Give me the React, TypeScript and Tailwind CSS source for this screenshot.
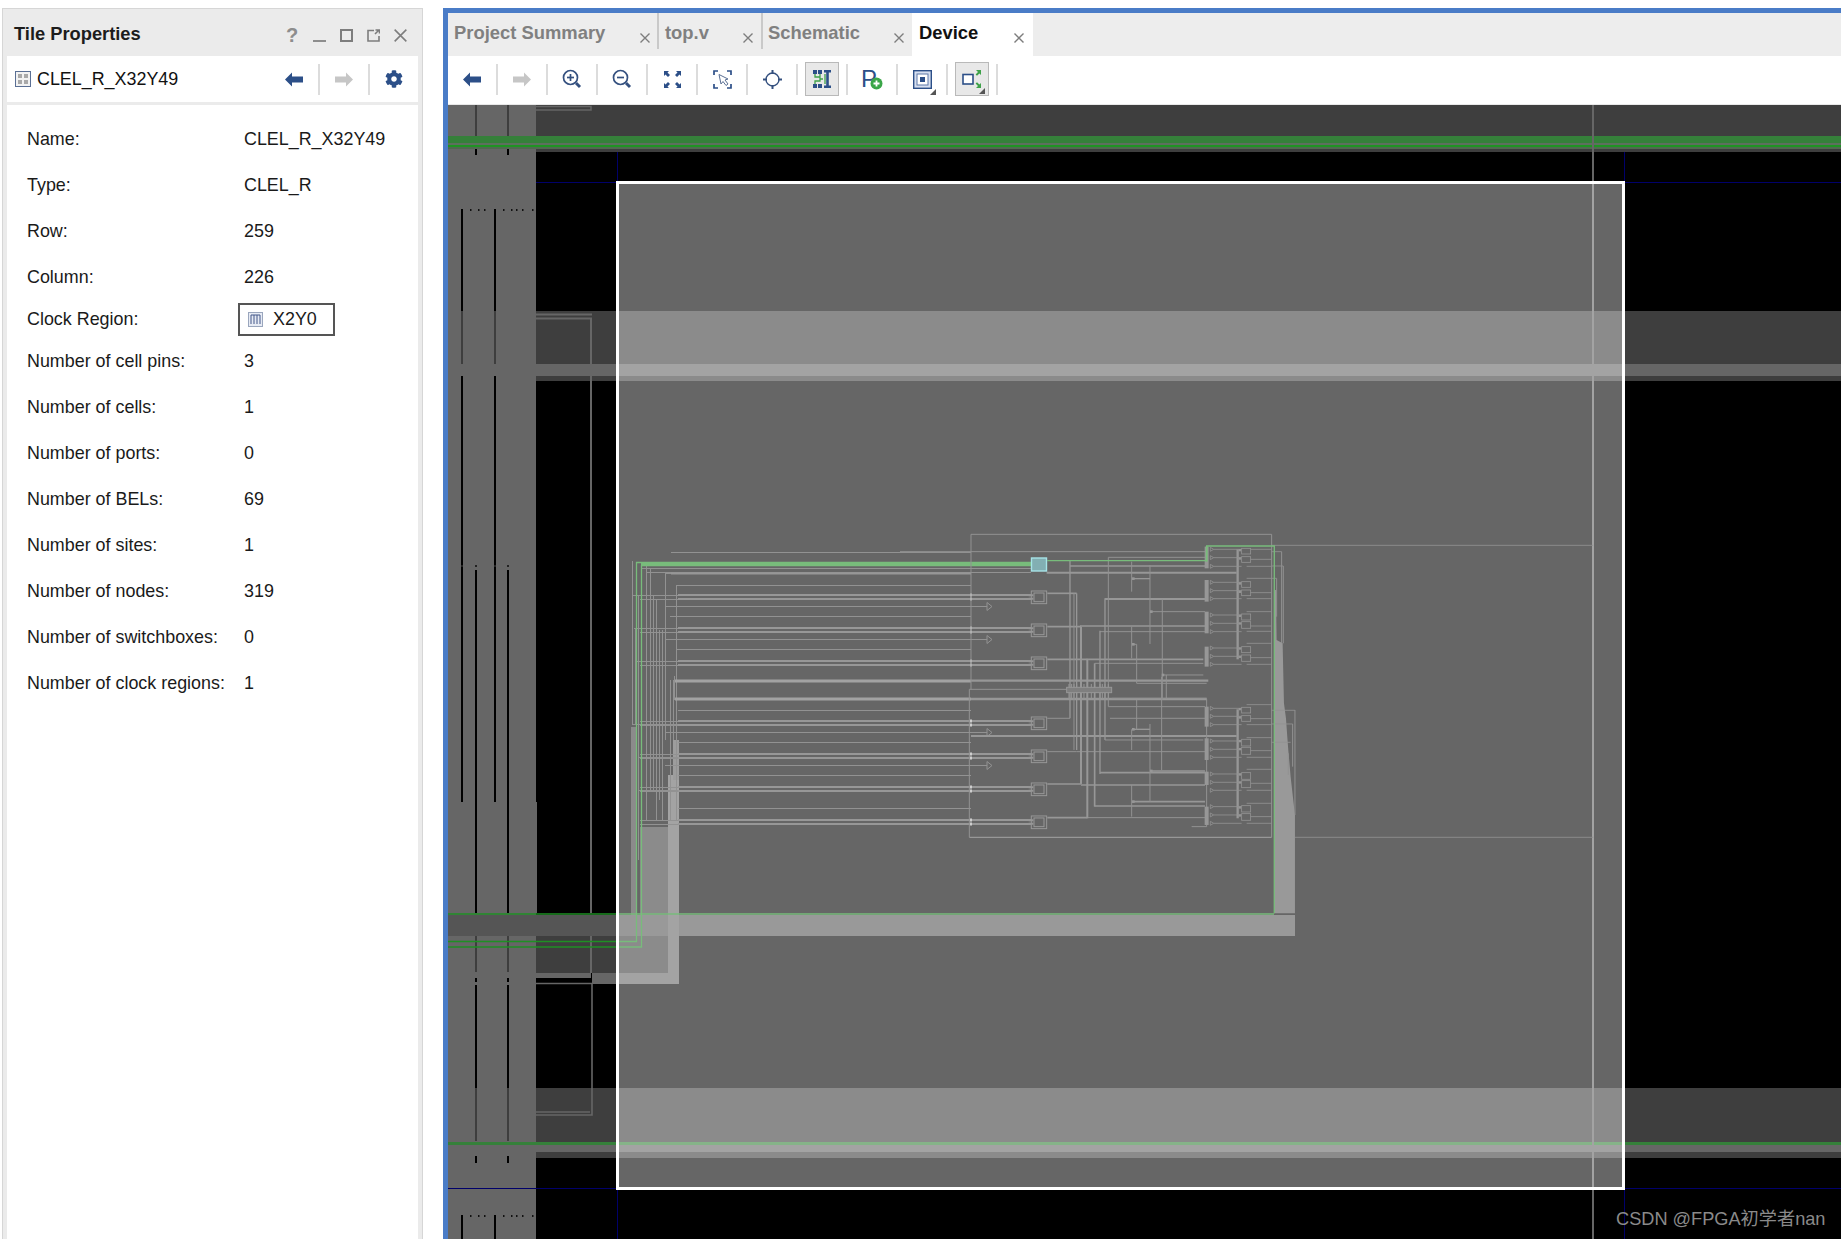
import { FaCog } from 'react-icons/fa';

const sans = "font-['Liberation_Sans',Arial,sans-serif]";

const rows: [string, string][] = [
  ['Name:', 'CLEL_R_X32Y49'],
  ['Type:', 'CLEL_R'],
  ['Row:', '259'],
  ['Column:', '226'],
  ['Clock Region:', 'X2Y0'],
  ['Number of cell pins:', '3'],
  ['Number of cells:', '1'],
  ['Number of ports:', '0'],
  ['Number of BELs:', '69'],
  ['Number of sites:', '1'],
  ['Number of nodes:', '319'],
  ['Number of switchboxes:', '0'],
  ['Number of clock regions:', '1'],
];

const BLUE = '#2c4f88';

const BackArrow = () => (
  <svg width="18" height="15" viewBox="0 0 18 15"><path d="M0 7.5 7 .5v4h11v6H7v4z" fill={BLUE} /></svg>
);
const ForwardArrow = () => (
  <svg width="18" height="15" viewBox="0 0 18 15"><path d="M18 7.5 11 .5v4H0v6h11v4z" fill="#c6c6c6" /></svg>
);
const ZoomIcon = ({ plus }: { plus?: boolean }) => (
  <svg width="20" height="20" viewBox="0 0 20 20" fill="none" stroke="#34507f" strokeWidth="1.7">
    <circle cx="8.5" cy="8.5" r="7" />
    <path d="M5 8.5h7" />
    {plus && <path d="M8.5 5v7" />}
    <path d="m14 14 4 4" strokeWidth="3" />
  </svg>
);
const FitIcon = () => (
  <svg width="19" height="19" viewBox="0 0 19 19" fill={BLUE}>
    <path d="M1 1h5L4.500 2.500 7 5 5 7 2.500 4.500 1 6zM18 1h-5l1.500 1.500L12 5l2 2 2.500-2.500L18 6zM1 18h5l-1.500-1.500L7 14l-2-2-2.500 2.500L1 13zM18 18h-5l1.500-1.500L12 14l2-2 2.500 2.500L18 13z" />
  </svg>
);
const SelectIcon = () => (
  <svg width="19" height="19" viewBox="0 0 19 19" fill="none">
    <path d="M1 5V1h4M14 1h4v4M1 14v4h4M18 14v4h-4" stroke={BLUE} strokeWidth="1.7" />
    <path d="m6 4.500 2 9.500 2-2.500 3 4 2-1.500-3-4 3-1z" stroke="#5a6f94" fill="#fff" strokeWidth="1" />
  </svg>
);
const CrosshairIcon = () => (
  <svg width="19" height="19" viewBox="0 0 19 19" fill="none" stroke="#34507f" strokeWidth="1.4">
    <circle cx="9.500" cy="9.500" r="6.500" />
    <path d="M9.500 0v4M9.500 15v4M0 9.500h4M15 9.500h4" strokeWidth="2" />
  </svg>
);
const RouteIcon = () => (
  <svg width="18" height="18" viewBox="0 0 18 18">
    <path d="M2 4v3h5V4M7 7v4H2v3M10 9H7M12 4v10" fill="none" stroke="#3fa24a" strokeWidth="1.300" />
    <path d="M0 0h4v4H0zM5 0h4v4H5zM0 14h4v4H0zM5 14h4v4H5zM11 0h7v2.500h-2.200v13H18V18h-7v-2.500h2.200v-13H11z" fill={BLUE} />
  </svg>
);
const PinIcon = () => (
  <svg width="22" height="24" viewBox="0 0 22 24" className="overflow-visible">
    <text x="0" y="20" fontSize="24" fontFamily="Liberation Sans" fill={BLUE}>P</text>
    <circle cx="15.500" cy="16.500" r="6" fill="#3aa648" />
    <path d="M12.500 16.500h6M15.500 13.500v6" stroke="#fff" strokeWidth="1.800" />
  </svg>
);
const Corner = () => <div className="absolute right-[3px] bottom-[1px] w-0 h-0 border-l-[6px] border-l-transparent border-b-[6px] border-b-[#555]" />;
const FrameIcon = () => (
  <svg width="19" height="19" viewBox="0 0 19 19">
    <rect x=".7" y=".7" width="17.600" height="17.600" fill="#d6dff0" stroke={BLUE} strokeWidth="1.400" />
    <rect x="4" y="4" width="11" height="11" fill="#fff" stroke="#5c78a8" />
    <rect x="7" y="7" width="5" height="5" fill={BLUE} />
  </svg>
);
const ExpandIcon = () => (
  <svg width="20" height="20" viewBox="0 0 20 20">
    <rect x="1" y="5.500" width="10" height="9.500" fill="#fff" stroke={BLUE} strokeWidth="1.600" />
    <path d="M14 1h5v5l-1.600-1.600-2.400 2.400-1.400-1.400 2.400-2.400zM14 19h5v-5l-1.600 1.600-2.400-2.400-1.400 1.400 2.400 2.400z" fill="#3fa24a" />
  </svg>
);
const TileIcon = () => (
  <svg width="16" height="16" viewBox="0 0 16 16">
    <rect x=".5" y=".5" width="15" height="15" fill="#f2f2f2" stroke="#5a6f94" />
    <path d="M3 3h4v4H3zM9 3h4v4H9zM3 9h4v4H3zM9 9h4v4H9z" fill="#a9a9a9" />
  </svg>
);
const ClockIcon = () => (
  <svg width="15" height="15" viewBox="0 0 15 15" fill="none">
    <rect x=".5" y=".5" width="14" height="14" fill="#e7ebf4" stroke="#9aa6bd" />
    <path d="M3 12V3h3v9M6 3h3v9M9 3h3v9" stroke="#44598a" strokeWidth="1" />
  </svg>
);

const CloseX = ({ size = 10, color = '#7d7d7d', width = 1.4 }: { size?: number; color?: string; width?: number }) => (
  <svg width={size} height={size} viewBox="0 0 10 10" className="shrink-0"><path d="m.5.500 9 9M9.500.500l-9 9" stroke={color} strokeWidth={width} fill="none" /></svg>
);

const Sep = () => <div className="w-[2px] h-[31px] bg-[#dcdcdc] shrink-0" />;
const Btn = ({ children, active, corner }: { children: React.ReactNode; active?: boolean; corner?: boolean }) => (
  <div className="w-[48px] h-[34px] flex items-center justify-center shrink-0">
    <div className={active ? 'relative w-[34px] h-[34px] flex items-center justify-center bg-[#e8e8e8] border border-[#b9b9b9]' : 'relative w-[34px] h-[34px] flex items-center justify-center'}>
      {children}
      {corner && <Corner />}
    </div>
  </div>
);

const cells = [564, 597, 630, 663, 723, 756, 789, 822];
const topThin: [number, number][] = [[552, 671], [585, 677], [616, 670], [649, 677], [710, 678], [742, 678], [775, 678], [808, 678]];
const lowThin = [606, 639, 732, 765];
const stackV: [number, number, number][] = [
  [632, 561, 724], [635, 628, 724], [638, 595, 860], [646, 565, 820], [650, 568, 790], [653, 595, 790],
  [656, 600, 820], [659, 630, 800], [662, 630, 820], [665, 573, 740], [670, 680, 820], [673, 680, 740], [676, 585, 820],
];
const stackH: [number, number, number][] = [
  [632, 595, 678], [634, 628, 678], [635, 661, 678], [632, 724, 678], [638, 757, 678], [638, 790, 678],
  [642, 568, 1031], [646, 572, 1031], [665, 573, 971],
];

// right half of the schematic, in zoom units (1/3 px)
const hLines: [number, number, number, number][] = [
  [213, 103, 1115, 3], [0, 155, 920, 3], [442, 280, 530, 5], [442, 380, 543, 5], [442, 478, 562, 5], [442, 655, 510, 3],
  [442, 755, 530, 3], [442, 852, 543, 5], [442, 953, 562, 5], [625, 172, 920, 3], [510, 198, 920, 5], [440, 218, 1010, 6],
  [615, 297, 915, 6], [600, 395, 915, 3], [540, 378, 915, 5], [584, 490, 910, 3], [560, 478, 910, 5], [213, 542, 925, 7],
  [213, 597, 920, 7], [625, 620, 915, 3], [630, 655, 920, 3], [213, 708, 1010, 6], [615, 720, 910, 3], [530, 755, 915, 3],
  [600, 818, 915, 5], [543, 855, 915, 5], [584, 918, 915, 4], [562, 953, 915, 3], [700, 236, 750, 4], [755, 335, 915, 3],
  [700, 433, 710, 3], [790, 525, 910, 3], [700, 688, 750, 4], [755, 813, 915, 5], [700, 905, 915, 5], [208, 1012, 1115, 4],
  [208, 568, 500, 3], [875, 980, 920, 3], [710, 550, 920, 3], [635, 595, 920, 3],
];
const vLines: [number, number, number, number][] = [
  [213, 103, 568, 3], [208, 568, 1012, 3], [1115, 103, 1012, 3], [510, 182, 655, 4], [522, 280, 750, 3], [530, 280, 750, 4],
  [543, 380, 852, 6], [562, 478, 955, 6], [584, 490, 920, 5], [600, 392, 822, 4], [615, 295, 720, 4], [625, 172, 620, 3],
  [695, 185, 275, 3], [750, 195, 432, 3], [787, 297, 600, 3], [799, 525, 597, 3], [695, 380, 475, 3], [710, 433, 550, 3],
  [710, 600, 690, 3], [750, 672, 905, 3], [695, 688, 750, 3], [785, 530, 810, 3], [695, 855, 950, 3], [920, 597, 980, 3],
  [1013, 148, 478, 7], [1013, 628, 955, 7], [1130, 235, 350, 3], [1145, 155, 430, 3], [1150, 198, 430, 3], [1185, 630, 945, 3], [1178, 672, 800, 3], [1165, 760, 825, 3],
];
const pinGroups: [number, number][] = [[140, 205], [240, 305], [335, 400], [440, 500], [620, 680], [715, 780], [815, 855], [920, 975]];
const tris = [148, 173, 199, 247, 272, 296, 345, 370, 395, 444, 469, 493, 625, 649, 674, 723, 748, 772, 822, 847, 871, 920, 945, 970];
const boxes: [number, number][] = [[145, 17], [170, 17], [245, 17], [270, 17], [342, 18], [365, 20], [440, 18], [465, 19], [622, 17], [647, 17], [718, 20], [742, 21], [818, 20], [842, 21], [917, 19], [941, 20]];
const toEdge = [148, 178, 199, 235, 278, 296, 335, 378, 394, 430, 473, 493, 614, 656, 674, 713, 752, 772, 808, 850, 871, 910, 950, 970];
const busV = [507, 515, 522, 530, 543, 552, 562, 574, 584, 600, 607, 615, 625];

const LINE = '#4a4a4a';
const THICK = '#525252';
const GREEN = '#1f8f24';

function DeviceView() {
  return (
    <svg viewBox="448 105 1393 1134" width="1393" height="1134" className="block">
      <rect x="448" y="105" width="1393" height="1134" fill="#000" />

      {/* clock region bands */}
      <rect x="536" y="105" width="1305" height="31" fill="#3e3e3e" />
      <rect x="536" y="311" width="1305" height="53" fill="#3e3e3e" />
      <rect x="536" y="364" width="1305" height="12" fill="#666" />
      <rect x="536" y="376" width="1305" height="5" fill="#3e3e3e" />
      <rect x="536" y="1088" width="1305" height="54" fill="#3e3e3e" />
      <rect x="536" y="1145" width="1305" height="7" fill="#666" />
      <rect x="536" y="1152" width="1305" height="6" fill="#3e3e3e" />
      <rect x="536" y="936" width="132" height="37" fill="#3e3e3e" />

      {/* left column */}
      <rect x="448" y="105" width="88" height="1134" fill="#666" />

      {/* green bands */}
      <rect x="448" y="136" width="1393" height="7" fill="#35803a" />
      <rect x="448" y="143" width="1393" height="2" fill="#5e6f5e" />
      <rect x="448" y="145" width="1393" height="2" fill="#1f9423" />
      <rect x="448" y="147" width="1393" height="2" fill="#4f6a4f" />
      <rect x="536" y="149" width="1305" height="3" fill="#3e3e3e" />
      <rect x="448" y="1142" width="1393" height="3" fill="#35803a" />

      {/* column wires */}
      {[462, 495].map((x) => (
        <g key={x}>
          <rect x={x - 1} y="209" width="2" height="102" fill="#000" />
          <rect x={x - 1} y="311" width="2" height="53" fill="#3e3e3e" />
          <rect x={x - 1} y="376" width="2" height="426" fill="#000" />
          <rect x={x - 1} y="1215" width="2" height="24" fill="#000" />
        </g>
      ))}
      {[476, 508].map((x) => (
        <g key={x}>
          <rect x={x - 1} y="105" width="2" height="31" fill="#3e3e3e" />
          <rect x={x - 1} y="149" width="2" height="6" fill="#000" />
          <rect x={x - 1} y="570" width="2" height="343" fill="#000" />
          <rect x={x - 1} y="936" width="2" height="36" fill="#3e3e3e" />
          <rect x={x - 1} y="978" width="2" height="4" fill="#000" />
          <rect x={x - 1} y="985" width="2" height="103" fill="#000" />
          <rect x={x - 1} y="1088" width="2" height="53" fill="#3e3e3e" />
          <rect x={x - 1} y="1156" width="2" height="7" fill="#000" />
        </g>
      ))}
      {[209, 1215].map((y) =>
        [470, 478, 484, 503, 511, 516, 522, 532].map((x) => <rect key={`${x}-${y}`} x={x} y={y} width="1.500" height="2" fill="#111" />),
      )}
      {[462, 476, 495, 508].map((x) => <rect key={x} x={x - 1} y="565" width="2" height="2" fill="#222" />)}
      <rect x="535" y="802" width="2" height="111" fill="#666" />

      {/* tile outlines */}
      <path d="M536 106.500H591V110H536" fill="none" stroke="#666" strokeWidth="1.500" />
      <path d="M536 314.500H592M536 318.500H591V364M591 376V913M591 936V973" fill="none" stroke="#666" strokeWidth="2" />
      <rect x="536" y="973" width="55" height="5" fill="#666" />
      <path d="M536 983.500H592V1115H536M536 1112H590" fill="none" stroke="#666" strokeWidth="1.600" />
      <path d="M1593 105V1239" stroke="#666" strokeWidth="2" />

      {/* navy nets */}
      <path d="M536 182.500H617M617.500 152V182M1625 182.500H1841M1624.500 152V182M448 1188.500H617M1625 1188.500H1841M617.500 1189V1239M1624.500 1189V1239" fill="none" stroke="#00006a" strokeWidth="1" />

      {/* thick route */}
      <rect x="448" y="915" width="847" height="21" fill="#555" />
      <rect x="592" y="973" width="87" height="11" fill="#666" />
      <rect x="668" y="775" width="11" height="198" fill="#666" />
      <rect x="673" y="740" width="6" height="40" fill="#5c5c5c" />
      <rect x="631" y="727" width="6" height="188" fill="#3e3e3e" />
      <rect x="640" y="827" width="28" height="88" fill="#3e3e3e" />
      <rect x="631" y="936" width="37" height="37" fill="#3e3e3e" />

      {/* left bundle */}
      {stackV.map(([x, a, b]) => <path key={`${x}-${a}`} d={`M${x + 0.5} ${a}V${b}`} stroke={LINE} strokeWidth="1" />)}
      {stackH.map(([x, y, x2]) => <path key={`${x}-${y}`} d={`M${x} ${y + 0.5}H${x2}`} stroke={LINE} strokeWidth="1" />)}
      {topThin.map(([y, x]) => <path key={y} d={`M${x} ${y + 0.5}H971`} stroke={LINE} strokeWidth="1" />)}
      {lowThin.map((y) => <path key={y} d={`M665 ${y + 0.5}H990`} stroke={LINE} strokeWidth="1" />)}
      <path d="M671 573.500H971" stroke={THICK} strokeWidth="2" />
      <path d="M674 681H971M675 699H971" stroke="#646464" strokeWidth="3" />
      <path d="M674.500 676V700" stroke={LINE} strokeWidth="1" fill="none" />
      {cells.slice(1).map((c) => (
        <g key={c}>
          <path d={`M640 ${c - 1.5}H678M640 ${c + 2.5}H678`} stroke={LINE} strokeWidth="1" />
          <path d={`M678 ${c - 2}H1031M678 ${c + 2}H1031`} stroke={THICK} strokeWidth="2" />
          <rect x="970" y={c - 3.5} width="2" height="3" fill="#adadad" />
          <rect x="970" y={c + 0.5} width="2" height="3" fill="#adadad" />
        </g>
      ))}
      {lowThin.map((y) => <path key={y} d={`M987 ${y - 3.5}l5 4-5 4z`} fill="#000" stroke={LINE} strokeWidth="1" />)}

      {/* green nets */}
      <path d="M448 914H1274M448 941.500H636.500V562.500H1031M448 947H641.500V565.500H1031" fill="none" stroke={GREEN} strokeWidth="1.300" />
      <path d="M641 564H1031" stroke={GREEN} strokeWidth="1.800" />

      {/* schematic, right side */}
      <g transform="translate(900 500) scale(0.3333)">
        <path d="M1122 270H1128L1130 420 1148 430 1152 610 1158 655 1162 710 1165 750 1172 830 1185 945V1240H1122Z" fill="#555" />
        <path d="M1115 136H2080M1185 1012H2080" fill="none" stroke={LINE} strokeWidth="2.500" />
        <path d="M1115 155H1145M1115 198H1150M1115 235H1130M1115 631H1185M1115 672H1178M1115 727H1172" fill="none" stroke={LINE} strokeWidth="2.500" />
        {hLines.map(([x, y, x2, w]) => <path key={`${x}-${y}`} d={`M${x} ${y}H${x2}`} stroke={w > 3 ? THICK : LINE} strokeWidth={w} />)}
        {vLines.map(([x, a, b, w]) => <path key={`${x}-${a}`} d={`M${x} ${a}V${b}`} stroke={w > 3 ? THICK : LINE} strokeWidth={w} />)}
        {toEdge.map((y) => <path key={y} d={`M1040 ${y}H1115`} stroke={LINE} strokeWidth="2.500" />)}
        {tris.map((y) => <path key={y} d={`M941 ${y}H1025`} stroke={LINE} strokeWidth="2.500" />)}
        {pinGroups.map(([a, b]) => <path key={a} d={`M920 ${a}V${b}`} stroke={THICK} strokeWidth="12" />)}
        {tris.map((y) => <path key={y} d={`M931 ${y - 6}l10 6-10 6z`} fill="#000" stroke={LINE} strokeWidth="2.500" />)}
        {boxes.map(([y, h]) => <rect key={y} x="1025" y={y} width="27" height={h} fill="#000" stroke={LINE} strokeWidth="2.500" />)}
        {boxes.map(([y]) => <rect key={y} x="1016" y={y + 2} width="7" height="7" fill={THICK} />)}
        <rect x="500" y="562" width="135" height="16" fill="#2a2a2a" stroke={THICK} strokeWidth="3" />
        {busV.map((x) => <path key={x} d={`M${x} 552V562M${x} 578V596`} stroke={THICK} strokeWidth="3" />)}
        <rect x="696" y="232" width="8" height="8" fill={THICK} />
        <rect x="750" y="331" width="8" height="8" fill={THICK} />
        <rect x="696" y="429" width="8" height="8" fill={THICK} />
        <rect x="785" y="521" width="8" height="8" fill={THICK} />
        <rect x="696" y="684" width="8" height="8" fill={THICK} />
        <rect x="750" y="809" width="8" height="8" fill={THICK} />
        <rect x="696" y="901" width="8" height="8" fill={THICK} />
        {/* cells */}
        {[292, 391, 490, 670, 769, 868, 967].map((c) => (
          <g key={c}>
            <rect x="394" y={c - 19} width="46" height="38" fill="none" stroke={THICK} strokeWidth="3" />
            <rect x="402" y={c - 13} width="30" height="26" fill="#000" stroke={THICK} strokeWidth="3" />
            <path d={`M386 ${c - 6}h14M386 ${c + 4}h14`} stroke={THICK} strokeWidth="6" />
          </g>
        ))}
        <path d="M442 182H510M510 182H920V138H1123V1240" fill="none" stroke={GREEN} strokeWidth="4" />
        <path d="M920 138V185" stroke={GREEN} strokeWidth="5" />
      </g>

      {/* selected cell */}
      <rect x="1031.500" y="558" width="15" height="13" fill="#2f7a80" stroke="#6cd0d8" strokeWidth="1.400" />

      {/* selected tile */}
      <rect x="617.500" y="182.500" width="1006" height="1006" fill="#fff" fillOpacity="0.4" stroke="#fff" strokeWidth="3" />
    </svg>
  );
}

export default function App() {
  return (
    <div className={`w-[1841px] h-[1239px] bg-white overflow-hidden flex pt-[8px] pl-[2px] ${sans}`}>
      {/* Tile Properties panel */}
      <div className="w-[421px] h-full shrink-0 border border-[#d6d6d6] border-b-0 bg-[#ebebeb] px-[4px] flex flex-col">
        <div className="h-[47px] shrink-0 flex items-center pl-[7px] pr-[11px]">
          <span className="text-[18.300px] font-bold text-[#1c1c1c] mt-[2px]">Tile Properties</span>
          <div className="ml-auto flex items-center mt-[5px]">
            <span className="w-[27px] text-[20px] font-bold text-[#8d8d8d] leading-none">?</span>
            <div className="w-[27px] h-[14px] flex items-end"><div className="w-[13px] h-[2px] bg-[#8d8d8d]" /></div>
            <div className="w-[27px]"><div className="w-[13px] h-[13px] border-2 border-[#7d7d7d]" /></div>
            <div className="w-[27px]">
              <svg width="13" height="13" viewBox="0 0 13 13" fill="none" stroke="#7d7d7d" strokeWidth="1.600"><path d="M7 1.500H1V12h11V7M8 5l4-4M8.500 1H12.500V4.500" /></svg>
            </div>
            <CloseX size={13} color="#7d7d7d" width={1.200} />
          </div>
        </div>
        <div className="h-[46px] shrink-0 bg-white flex items-center text-[17.900px] text-[#111]">
          <div className="ml-[8px] mr-[6px]"><TileIcon /></div>
          <span>CLEL_R_X32Y49</span>
          <div className="ml-auto flex items-center">
            <Btn><BackArrow /></Btn>
            <Sep />
            <Btn><ForwardArrow /></Btn>
            <Sep />
            <Btn><FaCog size={18} color={BLUE} /></Btn>
          </div>
        </div>
        <div className="h-[3px] shrink-0" />
        <div className="flex-1 bg-white pt-[11px] pl-[20px] text-[17.900px] text-[#1a1a1a]">
          {rows.map(([label, value]) => (
            <div key={label} className={label === 'Clock Region:' ? 'h-[38px] flex items-center' : 'h-[46px] flex items-center'}>
              <div className="w-[217px] shrink-0">{label}</div>
              {label === 'Clock Region:' ? (
                <div className="-ml-[6px] w-[97px] h-[33px] border-2 border-[#555] flex items-center pl-[8px] gap-[10px]">
                  <ClockIcon />
                  <span>{value}</span>
                </div>
              ) : (
                <div>{value}</div>
              )}
            </div>
          ))}
        </div>
      </div>

      {/* Device window */}
      <div className="ml-[20px] flex-1 min-w-0 h-full border-l-[5px] border-t-[5px] border-[#4a7cc7] flex flex-col">
        <div className="h-[43px] shrink-0 bg-[#ededed] flex text-[18.400px] font-bold text-[#808080]">
          <div className="w-[209px] pl-[6px] pr-[7px] flex items-center"><span className="mb-[4px]">Project Summary</span><div className="ml-auto mt-[6px]"><CloseX /></div></div>
          <div className="w-[2px] h-[36px] bg-[#c9c9c9]" />
          <div className="w-[102px] pl-[6px] pr-[8px] flex items-center"><span className="mb-[4px]">top.v</span><div className="ml-auto mt-[6px]"><CloseX /></div></div>
          <div className="w-[2px] h-[36px] bg-[#c9c9c9]" />
          <div className="w-[149px] pl-[5px] pr-[8px] flex items-center"><span className="mb-[4px]">Schematic</span><div className="ml-auto mt-[6px]"><CloseX /></div></div>
          <div className="w-[121px] bg-white pl-[7px] pr-[9px] flex items-center text-[#111]"><span className="mb-[4px]">Device</span><div className="ml-auto mt-[6px]"><CloseX /></div></div>
        </div>
        <div className="h-[49px] shrink-0 bg-white border-b border-[#e8e8e8] flex items-center pb-[2px]">
          <Btn><BackArrow /></Btn>
          <Sep />
          <Btn><ForwardArrow /></Btn>
          <Sep />
          <Btn><ZoomIcon plus /></Btn>
          <Sep />
          <Btn><ZoomIcon /></Btn>
          <Sep />
          <Btn><FitIcon /></Btn>
          <Sep />
          <Btn><SelectIcon /></Btn>
          <Sep />
          <Btn><CrosshairIcon /></Btn>
          <Sep />
          <Btn active><RouteIcon /></Btn>
          <Sep />
          <Btn><PinIcon /></Btn>
          <Sep />
          <Btn corner><FrameIcon /></Btn>
          <Sep />
          <Btn active corner><ExpandIcon /></Btn>
          <Sep />
        </div>
        <div className="relative flex-1 min-h-0 overflow-hidden">
          <DeviceView />
          <span className="absolute left-[1168px] top-[1102px] text-[18.200px] leading-[24px] whitespace-nowrap text-[#8a8a8a] font-['Liberation_Sans','Noto_Sans_CJK_SC',sans-serif]">CSDN @FPGA初学者nan</span>
        </div>
      </div>
    </div>
  );
}
